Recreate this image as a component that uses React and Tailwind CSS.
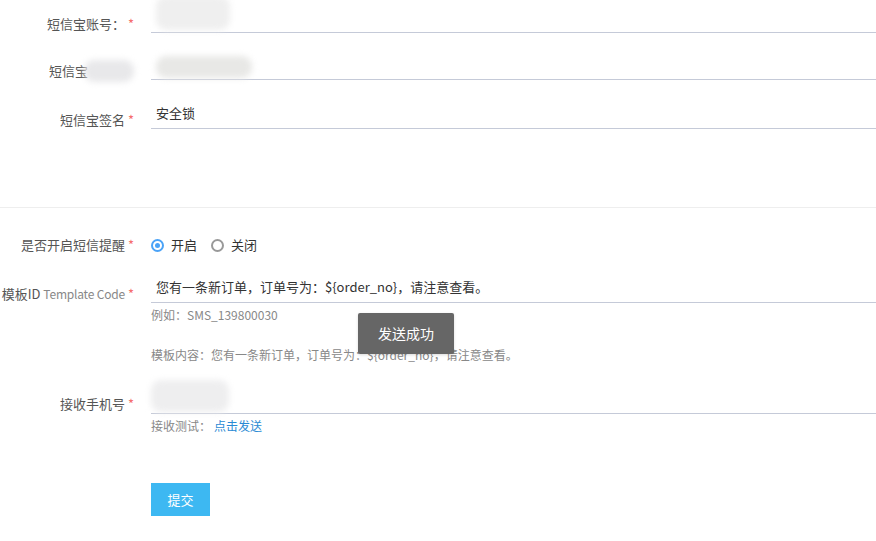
import { useState } from "react";

const font = { fontFamily: '"Noto Sans CJK SC", "Noto Sans", sans-serif' };

function Star() {
  return <span className="ml-[3px] text-[#f56c6c]">*</span>;
}

function Blur({ className }) {
  return <span className={"inline-block rounded-[10px] blur-[3px] " + className} />;
}

function Row({ label, children, labelPad = "pt-[15px]" }) {
  return (
    <div className="flex">
      <label className={"w-[143px] shrink-0 pr-[9px] text-right text-[13px] leading-[18px] text-[#555] " + labelPad}>
        {label}
      </label>
      <div className="min-w-0 flex-1 pl-[8px]">{children}</div>
    </div>
  );
}

function Line({ children }) {
  return (
    <div className="flex h-[33px] items-end border-b border-[#c5cad8] pb-[4px] pl-[5px] text-[13px] leading-[18px] text-[#333]">
      {children}
    </div>
  );
}

function Radio({ checked, label, onClick }) {
  return (
    <button type="button" onClick={onClick} className="flex items-center gap-[7px] text-[13px] leading-[18px] text-[#333]">
      <span
        className={
          "flex h-[13px] w-[13px] items-center justify-center rounded-full border-2 " +
          (checked ? "border-[#4ba3f7]" : "border-[#999]")
        }
      >
        {checked && <span className="h-[5px] w-[5px] rounded-full bg-[#4ba3f7]" />}
      </span>
      {label}
    </button>
  );
}

export default function App() {
  const [on, setOn] = useState(true);

  return (
    <div className="relative h-[541px] w-[876px] overflow-hidden bg-white" style={font}>
      <div className="flex flex-col gap-[14px]">
        <Row label={<>短信宝账号：<Star /></>}>
          <Line>
            <Blur className="mb-[-2px] h-[34px] w-[74px] bg-[#efefef]" />
          </Line>
        </Row>
        <Row
          label={
            <span className="inline-flex items-center">
              短信宝
              <Blur className="ml-[-4px] h-[22px] w-[50px] bg-[#e8e8ea]" />
            </span>
          }
          labelPad="pt-[13px]"
        >
          <Line>
            <Blur className="mb-[-3px] h-[22px] w-[96px] bg-[#e8e8e6]" />
          </Line>
        </Row>
        <Row label={<>短信宝签名<Star /></>}>
          <Line>
            <span className="mb-[2px]">安全锁</span>
          </Line>
        </Row>
      </div>

      <div className="mt-[78px] border-t border-[#eee]" />

      <div className="mt-[28px] flex items-center">
        <div className="w-[143px] shrink-0 pr-[9px] text-right text-[13px] leading-[18px] text-[#555]">
          是否开启短信提醒<Star />
        </div>
        <div className="flex items-center gap-[14px] pl-[8px]">
          <Radio checked={on} label="开启" onClick={() => setOn(true)} />
          <Radio checked={!on} label="关闭" onClick={() => setOn(false)} />
        </div>
      </div>

      <div className="mt-[16px]">
        <Row
          label={
            <span className="whitespace-nowrap">
              模板ID <span className="text-[12px] tracking-[-0.2px] text-[#888]">Template Code</span>
              <Star />
            </span>
          }
          labelPad="pt-[15px]"
        >
          <Line>
            <span className="mb-[2px]">您有一条新订单，订单号为：${"{order_no}"}，请注意查看。</span>
          </Line>
          <p className="mt-[4px] text-[12px] leading-[16px] text-[#888]">例如：SMS_139800030</p>
          <p className="mt-[24px] text-[12px] leading-[16px] text-[#888]">
            模板内容：您有一条新订单，订单号为：${"{order_no}"}，请注意查看。
          </p>
        </Row>
      </div>

      <div className="mt-[10px]">
        <Row label={<>接收手机号<Star /></>} labelPad="pt-[22px]">
          <div className="flex h-[41px] items-end border-b border-[#c5cad8] pb-[1px]">
            <Blur className="h-[32px] w-[78px] bg-[#eeeeef]" />
          </div>
          <p className="mt-[4px] text-[12px] leading-[16px] text-[#888]">
            接收测试：<a href="#" className="ml-[3px] text-[#2a8ad4]">点击发送</a>
          </p>
        </Row>
      </div>

      <div className="mt-[49px] pl-[151px]">
        <button type="button" className="h-[33px] w-[59px] bg-[#3db8f2] text-[13px] text-white">
          提交
        </button>
      </div>

      <div className="absolute left-[358px] top-[313px] flex h-[41px] w-[96px] items-center justify-center rounded-[2px] bg-[#666] text-[14px] text-white shadow-[0_1px_3px_rgba(0,0,0,0.15)]">
        发送成功
      </div>
    </div>
  );
}
